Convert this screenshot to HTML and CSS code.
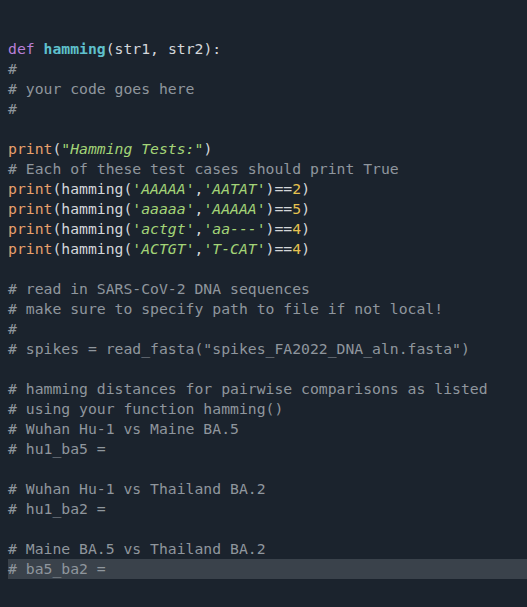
FILE: index.html
```html
<!DOCTYPE html>
<html>
<head>
<meta charset="utf-8">
<link rel="stylesheet" href="styles.css">
</head>
<body>
<div class="editor">
<div class="line"><span class="kw">def</span> <span class="fn">hamming</span>(str1, str2):</div>
<div class="line cm">#</div>
<div class="line cm"># your code goes here</div>
<div class="line cm">#</div>
<div class="line"> </div>
<div class="line"><span class="bi">print</span>(<span class="st">"Hamming Tests:"</span>)</div>
<div class="line cm"># Each of these test cases should print True</div>
<div class="line"><span class="bi">print</span>(hamming(<span class="st">'AAAAA'</span>,<span class="st">'AATAT'</span>)==<span class="nu">2</span>)</div>
<div class="line"><span class="bi">print</span>(hamming(<span class="st">'aaaaa'</span>,<span class="st">'AAAAA'</span>)==<span class="nu">5</span>)</div>
<div class="line"><span class="bi">print</span>(hamming(<span class="st">'actgt'</span>,<span class="st">'aa---'</span>)==<span class="nu">4</span>)</div>
<div class="line"><span class="bi">print</span>(hamming(<span class="st">'ACTGT'</span>,<span class="st">'T-CAT'</span>)==<span class="nu">4</span>)</div>
<div class="line"> </div>
<div class="line cm"># read in SARS-CoV-2 DNA sequences</div>
<div class="line cm"># make sure to specify path to file if not local!</div>
<div class="line cm">#</div>
<div class="line cm"># spikes = read_fasta("spikes_FA2022_DNA_aln.fasta")</div>
<div class="line"> </div>
<div class="line cm"># hamming distances for pairwise comparisons as listed</div>
<div class="line cm"># using your function hamming()</div>
<div class="line cm"># Wuhan Hu-1 vs Maine BA.5</div>
<div class="line cm"># hu1_ba5 =</div>
<div class="line"> </div>
<div class="line cm"># Wuhan Hu-1 vs Thailand BA.2</div>
<div class="line cm"># hu1_ba2 =</div>
<div class="line"> </div>
<div class="line cm"># Maine BA.5 vs Thailand BA.2</div>
<div class="line cm current"># ba5_ba2 =</div>
</div>
</body>
</html>
```
FILE: styles.css
```css
html, body {
  margin: 0;
  padding: 0;
  background: #1b232d;
  height: 100%;
  overflow: hidden;
}
.editor {
  padding: 39px 0 0 8px;
  font-family: "DejaVu Sans Mono", "Liberation Mono", monospace;
  font-size: 14.75px;
  color: #d4d7db;
}
.line {
  height: 20px;
  line-height: 20px;
  white-space: pre;
}
.kw { color: #b87fd6; }
.fn { color: #5fc0cc; font-weight: bold; }
.bi { color: #e8a06c; }
.st { color: #a3d477; font-style: italic; }
.nu { color: #e6c24f; }
.cm { color: #8f969d; }
.current { background: #3a424b; }
```
